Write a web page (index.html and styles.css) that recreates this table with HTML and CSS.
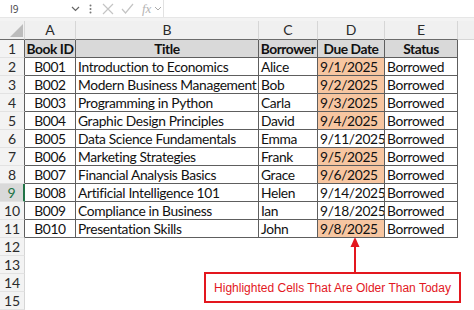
FILE: index.html
```html
<!DOCTYPE html>
<html>
<head>
<meta charset="utf-8">
<link rel="stylesheet" href="styles.css">
</head>
<body>
<div class="app">
  <div class="fbar">
    <div class="namebox"><span class="ref">I9</span>
      <svg class="chev" width="9" height="6" viewBox="0 0 9 6"><path d="M1 1 L4.5 4.5 L8 1" fill="none" stroke="#666" stroke-width="1.2"/></svg>
    </div>
    <div class="dots"><svg width="3" height="10" viewBox="0 0 3 10"><circle cx="1.5" cy="1.5" r="1" fill="#777"/><circle cx="1.5" cy="5" r="1" fill="#777"/><circle cx="1.5" cy="8.5" r="1" fill="#777"/></svg></div>
    <div class="tools">
      <svg width="12" height="12" viewBox="0 0 12 12"><path d="M1 1 L11 11 M11 1 L1 11" stroke="#c4c4c4" stroke-width="1.2" fill="none"/></svg>
      <svg width="13" height="11" viewBox="0 0 13 11"><path d="M1 6 L4.5 10 L12 1" stroke="#c4c4c4" stroke-width="1.2" fill="none"/></svg>
      <span class="fx">fx</span>
      <svg width="8" height="5" viewBox="0 0 8 5"><path d="M1 1 L4 4 L7 1" fill="none" stroke="#aaa" stroke-width="1"/></svg>
    </div>
    <div class="finput"></div>
  </div>
  <div class="band"></div>
  <div class="sheet">
    <div class="corner"><svg width="13" height="13" viewBox="0 0 13 13"><path d="M13 0 L13 13 L0 13 Z" fill="#bcbcbc"/></svg></div>
    <div class="ch">A</div><div class="ch">B</div><div class="ch">C</div><div class="ch">D</div><div class="ch">E</div><div class="ch rest"></div>

    <div class="rh">1</div><div class="c hd">Book ID</div><div class="c hd">Title</div><div class="c hd">Borrower</div><div class="c hd">Due Date</div><div class="c hd">Status</div><div class="e"></div>

    <div class="rh">2</div><div class="c ctr">B001</div><div class="c">Introduction to Economics</div><div class="c">Alice</div><div class="c old">9/1/2025</div><div class="c">Borrowed</div><div class="e"></div>
    <div class="rh">3</div><div class="c ctr">B002</div><div class="c">Modern Business Management</div><div class="c">Bob</div><div class="c old">9/2/2025</div><div class="c">Borrowed</div><div class="e"></div>
    <div class="rh">4</div><div class="c ctr">B003</div><div class="c">Programming in Python</div><div class="c">Carla</div><div class="c old">9/3/2025</div><div class="c">Borrowed</div><div class="e"></div>
    <div class="rh">5</div><div class="c ctr">B004</div><div class="c">Graphic Design Principles</div><div class="c">David</div><div class="c old">9/4/2025</div><div class="c">Borrowed</div><div class="e"></div>
    <div class="rh">6</div><div class="c ctr">B005</div><div class="c">Data Science Fundamentals</div><div class="c">Emma</div><div class="c">9/11/2025</div><div class="c">Borrowed</div><div class="e"></div>
    <div class="rh">7</div><div class="c ctr">B006</div><div class="c">Marketing Strategies</div><div class="c">Frank</div><div class="c old">9/5/2025</div><div class="c">Borrowed</div><div class="e"></div>
    <div class="rh">8</div><div class="c ctr">B007</div><div class="c">Financial Analysis Basics</div><div class="c">Grace</div><div class="c old">9/6/2025</div><div class="c">Borrowed</div><div class="e"></div>
    <div class="rh sel">9</div><div class="c ctr">B008</div><div class="c">Artificial Intelligence 101</div><div class="c">Helen</div><div class="c">9/14/2025</div><div class="c">Borrowed</div><div class="e"></div>
    <div class="rh">10</div><div class="c ctr">B009</div><div class="c">Compliance in Business</div><div class="c">Ian</div><div class="c">9/18/2025</div><div class="c">Borrowed</div><div class="e"></div>
    <div class="rh">11</div><div class="c ctr">B010</div><div class="c">Presentation Skills</div><div class="c">John</div><div class="c old">9/8/2025</div><div class="c">Borrowed</div><div class="e"></div>

    <div class="rh lo">12</div><div class="blank"></div>
    <div class="rh lo">13</div><div class="blank"></div>
    <div class="rh lo">14</div><div class="blank"></div>
    <div class="rh lo">15</div><div class="blank"></div>
  </div>

  <svg class="arrow" width="12" height="36" viewBox="0 0 12 36"><path d="M6 9 L6 36" stroke="#e3171e" stroke-width="2"/><path d="M6 0 L10.5 10 L1.5 10 Z" fill="#e3171e"/></svg>
  <div class="callout">Highlighted Cells That Are Older Than Today</div>
</div>
</body>
</html>
```

FILE: styles.css
```css
* { box-sizing: border-box; }
html, body { margin: 0; padding: 0; background: #fff; }
.app {
  position: relative;
  width: 474px;
  height: 310px;
  overflow: hidden;
  font-family: Lato, "Open Sans", sans-serif;
}
.fbar {
  height: 17px;
  display: flex;
  align-items: stretch;
  background: #fff;
}
.namebox {
  width: 84px;
  padding: 0 4px 0 10px;
  display: flex;
  align-items: center;
  justify-content: space-between;
  font-family: "Open Sans", sans-serif;
  font-size: 10px;
  color: #444;
}
.dots {
  width: 12px;
  display: flex;
  align-items: center;
  justify-content: center;
}
.tools {
  width: 67px;
  display: flex;
  align-items: center;
  gap: 7px;
  padding-left: 6px;
}
.fx {
  font-family: "Liberation Serif", serif;
  font-style: italic;
  font-size: 13px;
  color: #b4b4b4;
  margin-left: 1px;
  margin-right: -4px;
}
.finput {
  flex: 1;
  border-left: 1px solid #e2e2e2;
}
.band {
  height: 4px;
  background: #f3f3f3;
  border-top: 1px solid #e6e6e6;
}
.sheet {
  display: grid;
  grid-template-columns: 25px 51px 183px 59px 67px 73px 1fr;
  grid-template-rows: 19px repeat(15, 18px);
  font-size: 13.8px;
  letter-spacing: -0.35px;
  color: #111;
}
.corner {
  background: #f0f0f0;
  border-right: 1px solid #d6d6d6;
  border-bottom: 1px solid #6b6b6b;
  display: flex;
  align-items: flex-end;
  justify-content: flex-end;
  padding: 0 1px 2px 0;
}
.ch {
  background: #f0f0f0;
  border-right: 1px solid #d6d6d6;
  border-bottom: 1px solid #6b6b6b;
  display: flex;
  align-items: center;
  justify-content: center;
  color: #2b2b2b;
  line-height: 1;
  font-size: 14px;
  letter-spacing: 0;
}
.ch.rest { border-right: none; border-bottom: 1px solid #d6d6d6; }
.rh {
  background: #f3f3f3;
  border-right: 1px solid #5e5e5e;
  border-bottom: 1px solid #e2e2e2;
  display: flex;
  align-items: center;
  justify-content: center;
  color: #2b2b2b;
  line-height: 1;
  font-size: 14px;
  letter-spacing: 0;
}
.rh.lo { border-right: 1px solid #d6d6d6; }
.rh.sel {
  background: #d9d9d9;
  color: #217346;
  border-right: 2px solid #217346;
}
.c {
  border-right: 1px solid #5e5e5e;
  border-bottom: 1px solid #5e5e5e;
  display: flex;
  align-items: center;
  padding: 0 1px 0 2px;
  white-space: nowrap;
  line-height: 1;
  overflow: hidden;
}
.c.ctr { justify-content: center; padding: 0; }
.c.hd {
  background: #d9d9d9;
  font-weight: bold;
  justify-content: center;
  padding: 0;
  letter-spacing: -0.45px;
}
.c.old { background: #f7c6a1; }
.e { background: #fff; }
.blank { grid-column: 2 / 8; background: #fff; }
.arrow {
  position: absolute;
  left: 349px;
  top: 237px;
}
.callout {
  position: absolute;
  left: 204px;
  top: 272px;
  width: 257px;
  height: 31px;
  border: 2px solid #e3171e;
  color: #e3171e;
  font-family: "Liberation Sans", Arial, sans-serif;
  font-size: 12px;
  display: flex;
  align-items: center;
  justify-content: center;
  background: #fff;
}
```
